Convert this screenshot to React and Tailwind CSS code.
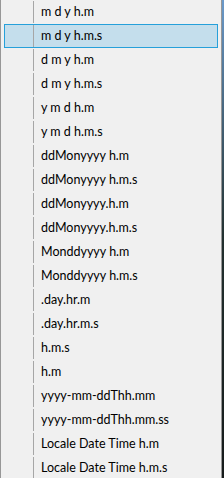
import React from 'react';

const items = [
  'm d y h.m',
  'm d y h.m.s',
  'd m y h.m',
  'd m y h.m.s',
  'y m d h.m',
  'y m d h.m.s',
  'ddMonyyyy h.m',
  'ddMonyyyy h.m.s',
  'ddMonyyyy.h.m',
  'ddMonyyyy.h.m.s',
  'Monddyyyy h.m',
  'Monddyyyy h.m.s',
  '.day.hr.m',
  '.day.hr.m.s',
  'h.m.s',
  'h.m',
  'yyyy-mm-ddThh.mm',
  'yyyy-mm-ddThh.mm.ss',
  'Locale Date Time h.m',
  'Locale Date Time h.m.s',
];

const selected = 1;

const MenuRow = ({ label, active }) => (
  <div
    className={
      'mx-[3px] flex h-[24px] items-stretch border ' +
      (active ? 'border-[#26a0da] bg-[#c4deec]' : 'border-transparent')
    }
  >
    <div className="w-[29px] shrink-0 border-r border-[#a6a6a6]" />
    <div className="flex items-center pl-[7px] text-[12.5px] leading-none text-black">
      {label}
    </div>
  </div>
);

export default function App() {
  return (
    <div
      className="flex h-[478px] w-[224px] overflow-hidden bg-[#1c2424]"
      style={{ fontFamily: 'Lato, "Noto Sans", Arial, sans-serif' }}
    >
      <div className="w-[222px] shrink-0 border-x border-[#979797] bg-[#f0f0f0]">
        {items.map((label, i) => (
          <MenuRow key={label} label={label} active={i === selected} />
        ))}
      </div>
      <div className="flex-1 bg-gradient-to-b from-[#6b9acb] via-[#22302f] to-[#161b1b]" />
    </div>
  );
}
